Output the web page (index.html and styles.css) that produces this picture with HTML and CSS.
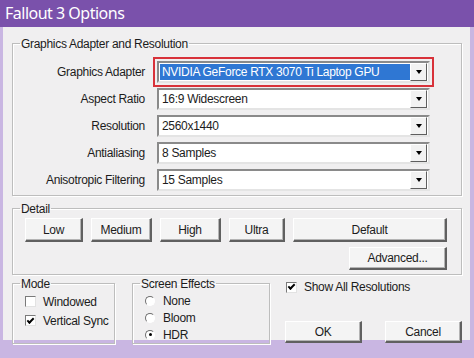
FILE: index.html
```html
<!DOCTYPE html>
<html lang="en">
<head>
	<meta charset="UTF-8">
	<title>Fallout 3 Options</title>
	<link rel="stylesheet" href="styles.css">
</head>
<body>
	<div class="window">
		<div class="titlebar">Fallout 3 Options</div>

		<div class="frame">
			<div class="client">
				<fieldset class="group">
					<legend>Graphics Adapter and Resolution</legend>
					<div class="rows">
						<span class="label">Graphics Adapter</span>
						<div class="combo focused">
							<span class="value selected">NVIDIA GeForce RTX 3070 Ti Laptop GPU</span>
							<span class="drop"></span>
						</div>

						<span class="label">Aspect Ratio</span>
						<div class="combo">
							<span class="value">16:9 Widescreen</span>
							<span class="drop"></span>
						</div>

						<span class="label">Resolution</span>
						<div class="combo">
							<span class="value">2560x1440</span>
							<span class="drop"></span>
						</div>

						<span class="label">Antialiasing</span>
						<div class="combo">
							<span class="value">8 Samples</span>
							<span class="drop"></span>
						</div>

						<span class="label">Anisotropic Filtering</span>
						<div class="combo">
							<span class="value">15 Samples</span>
							<span class="drop"></span>
						</div>
					</div>
				</fieldset>

				<fieldset class="group detail">
					<legend>Detail</legend>
					<div class="detail-inner">
						<div class="presets">
							<button class="btn low">Low</button>
							<button class="btn medium">Medium</button>
							<button class="btn high">High</button>
							<button class="btn ultra">Ultra</button>
							<button class="btn default">Default</button>
						</div>
						<div class="advanced-row">
							<button class="btn advanced">Advanced...</button>
						</div>
					</div>
				</fieldset>

				<div class="bottom">
					<fieldset class="group mode">
						<legend>Mode</legend>
						<div class="list checks">
							<div class="item"><span class="box"></span>Windowed</div>
							<div class="item"><span class="box checked"></span>Vertical Sync</div>
						</div>
					</fieldset>

					<fieldset class="group effects">
						<legend>Screen Effects</legend>
						<div class="list radios">
							<div class="item"><span class="radio"></span>None</div>
							<div class="item"><span class="radio"></span>Bloom</div>
							<div class="item"><span class="radio on"></span>HDR</div>
						</div>
					</fieldset>

					<div class="side">
						<div class="item show-all"><span class="box checked"></span>Show All Resolutions</div>
						<div class="actions">
							<button class="btn ok">OK</button>
							<button class="btn cancel">Cancel</button>
						</div>
					</div>
				</div>
			</div>
		</div>
	</div>
</body>
</html>
```

FILE: styles.css
```css
body {
	margin: 0;
	background: #c9b6e2;
}

.window {
	width: 474px;
	height: 358px;
	display: flex;
	flex-direction: column;
	font-family: "Liberation Sans", Arial, sans-serif;
	font-size: 12px;
	letter-spacing: -0.3px;
	color: #1c1c1c;
}

.titlebar {
	height: 27px;
	line-height: 27px;
	padding-left: 5px;
	background: #7a51ab;
	color: #ffffff;
	font-family: "Noto Sans", "Open Sans", sans-serif;
	font-size: 16px;
	letter-spacing: -0.5px;
}

.frame {
	padding: 0 4px 10px 3px;
	background: #c9b6e2;
}

.client {
	height: 313px;
	box-sizing: border-box;
	padding: 8px 8px 0 9px;
	background: #f0eff0;
	display: flex;
	flex-direction: column;
}

/* group boxes */
.group {
	margin: 0;
	padding: 0;
	min-width: 0;
	border: 1px solid #bdbdbd;
	box-shadow: inset 1px 1px 0 #ffffff, 1px 1px 0 #ffffff;
}

.group legend {
	margin-left: 7px;
	padding: 2px 1px 0;
	line-height: 14px;
}

.rows {
	display: grid;
	grid-template-columns: 1fr 273px;
	column-gap: 12px;
	row-gap: 5px;
	padding: 10px 31px 4px 0;
}

.label {
	text-align: right;
	line-height: 22px;
}

/* combo boxes */
.combo {
	height: 22px;
	box-sizing: border-box;
	border: 2px solid;
	border-color: #8a8a8a #e4e4e4 #e4e4e4 #8a8a8a;
	background: #ffffff;
	display: flex;
	align-items: center;
	padding: 0 1px 0 1px;
}

.focused {
	outline: 2px solid #d8323a;
	outline-offset: 2px;
}

.value {
	flex: 1;
	height: 16px;
	line-height: 16px;
	padding-left: 2px;
	white-space: nowrap;
	overflow: hidden;
}

.selected {
	background: #2f77d3;
	color: #ffffff;
}

.drop {
	width: 17px;
	height: 18px;
	box-sizing: border-box;
	border: 1px solid;
	border-color: #ffffff #5e5e5e #5e5e5e #ffffff;
	background: #f2f2f2;
	display: flex;
	align-items: center;
	justify-content: center;
}

.drop::after {
	content: "";
	border-top: 4px solid #000000;
	border-left: 3.5px solid transparent;
	border-right: 3.5px solid transparent;
}

/* buttons */
.btn {
	height: 24px;
	box-sizing: border-box;
	margin: 0;
	padding: 0;
	font: inherit;
	letter-spacing: inherit;
	color: inherit;
	background: #f4f4f4;
	border-style: solid;
	border-width: 1px 2px 2px 1px;
	border-color: #ffffff #606060 #606060 #ffffff;
	box-shadow: inset -1px -1px 0 #b4b4b4;
}

.detail {
	margin-top: 4px;
}

.detail-inner {
	padding: 2px 14px 4px 12px;
	display: flex;
	flex-direction: column;
	gap: 5px;
}

.presets {
	display: flex;
	gap: 8px;
}

.low { width: 58px; }
.medium { width: 61px; }
.high { width: 61px; }
.ultra { width: 56px; }
.default { flex: 1; }

.advanced-row {
	display: flex;
	justify-content: flex-end;
}

.advanced {
	width: 98px;
	height: 23px;
}

/* bottom section */
.bottom {
	display: flex;
	gap: 17px;
}

.mode {
	width: 103px;
	box-sizing: border-box;
}

.effects {
	width: 138px;
	box-sizing: border-box;
}

.list {
	padding: 1px 0 0 12px;
}

.item {
	display: flex;
	align-items: center;
	gap: 7px;
}

.checks .item {
	height: 19px;
}

.radios .item {
	height: 17px;
	gap: 8px;
}

.box {
	width: 9px;
	height: 9px;
	border: 1px solid;
	border-color: #7a7a7a #e2e2e2 #e2e2e2 #7a7a7a;
	background: #ffffff;
	display: flex;
	align-items: center;
	justify-content: center;
}

.checked::after {
	content: "";
	width: 5px;
	height: 2px;
	margin-top: -2px;
	border-left: 2px solid #000000;
	border-bottom: 2px solid #000000;
	transform: rotate(-45deg);
}

.radio {
	width: 8px;
	height: 8px;
	border-radius: 50%;
	border: 1px solid;
	border-color: #6e6e6e #ffffff #ffffff #6e6e6e;
	background: #ffffff;
	display: flex;
	align-items: center;
	justify-content: center;
}

.on::after {
	content: "";
	width: 3px;
	height: 3px;
	border-radius: 50%;
	background: #000000;
}

.side {
	flex: 1;
	display: flex;
	flex-direction: column;
	justify-content: space-between;
	padding: 4px 0 1px 0;
	margin-left: -2px;
}

.show-all {
	height: 16px;
	padding-left: 1px;
}

.actions {
	display: flex;
	justify-content: space-between;
}

.ok,
.cancel {
	width: 77px;
	height: 22px;
}
```
